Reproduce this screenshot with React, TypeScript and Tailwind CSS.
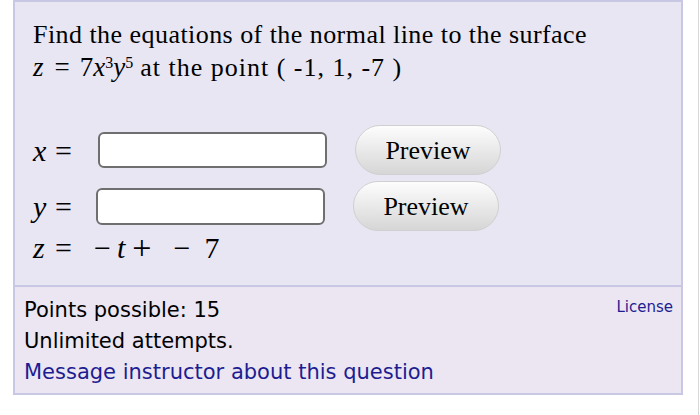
const serif = "font-['Liberation_Serif',serif]";

function Label({ v }: { v: string }) {
  return (
    <span className="flex w-[65px] shrink-0 items-center text-[30px]">
      <i className="w-[22px]">{v}</i>
      <span>=</span>
    </span>
  );
}

function PreviewButton() {
  return (
    <button
      type="button"
      className="flex h-[50px] w-[146px] items-center justify-center rounded-full border border-[#d0d0d0] bg-gradient-to-b from-[#fdfdfd] to-[#d6d6d6] text-[26px] text-black"
    >
      Preview
    </button>
  );
}

export default function App() {
  return (
    <div className="relative h-[415px] w-[700px] bg-white text-black">
      <div className="absolute right-[1px] top-0 h-full w-px bg-[#d9d9d9]" />
      <div className="ml-[13px] w-[670px] border-2 border-[#c9c8e4]">
        <div className={`h-[283px] bg-[#e8e6f3] pl-[18px] pt-[17px] ${serif}`}>
          <p className="text-[26px] leading-[32px] tracking-[0.45px]">
            Find the equations of the normal line to the surface
            <br />
            <span className="text-[27px] tracking-normal">
              <i>z</i>
              <span className="ml-[11px]">=</span>
              <span className="ml-[10px]">7</span>
              <i>x</i>
              <sup className="text-[16px]">3</sup>
              <i>y</i>
              <sup className="text-[16px]">5</sup>
            </span>{" "}
            <span className="tracking-[1px]">at the point ( -1, 1, -7 )</span>
          </p>

          <div className="mt-[41px] flex flex-col text-[26px]">
            <div className="flex h-[50px] items-center">
              <Label v="x" />
              <div className="h-[36px] w-[229px] rounded-[6px] border-2 border-[#6f6f6f] bg-white" />
              <div className="ml-[28px]">
                <PreviewButton />
              </div>
            </div>
            <div className="mt-[6px] flex h-[50px] items-center">
              <Label v="y" />
              <div className="-ml-[2px] h-[37px] w-[229px] rounded-[6px] border-2 border-[#6f6f6f] bg-white" />
              <div className="ml-[28px]">
                <PreviewButton />
              </div>
            </div>
            <div className="mt-[1px] flex h-[30px] items-center text-[30px]">
              <Label v="z" />
              <span className="-ml-[4px]">−</span>
              <i className="ml-[6px]">t</i>
              <span className="ml-[7px] text-[34px]">+</span>
              <span className="ml-[22px]">−</span>
              <span className="ml-[14px]">7</span>
            </div>
          </div>
        </div>
        <div className="flex h-[108px] justify-between border-t-2 border-[#c9c8e4] bg-[#ebe6f1] pl-[9px] pr-[8px] pt-[8px] font-['DejaVu_Sans',sans-serif]">
          <div className="text-[21px] leading-[31px]">
            <div>Points possible: 15</div>
            <div>Unlimited attempts.</div>
            <a className="text-[#1d1d92]">Message instructor about this question</a>
          </div>
          <a className="pt-[1px] text-[15px] text-[#1d1d92]">License</a>
        </div>
      </div>
    </div>
  );
}
